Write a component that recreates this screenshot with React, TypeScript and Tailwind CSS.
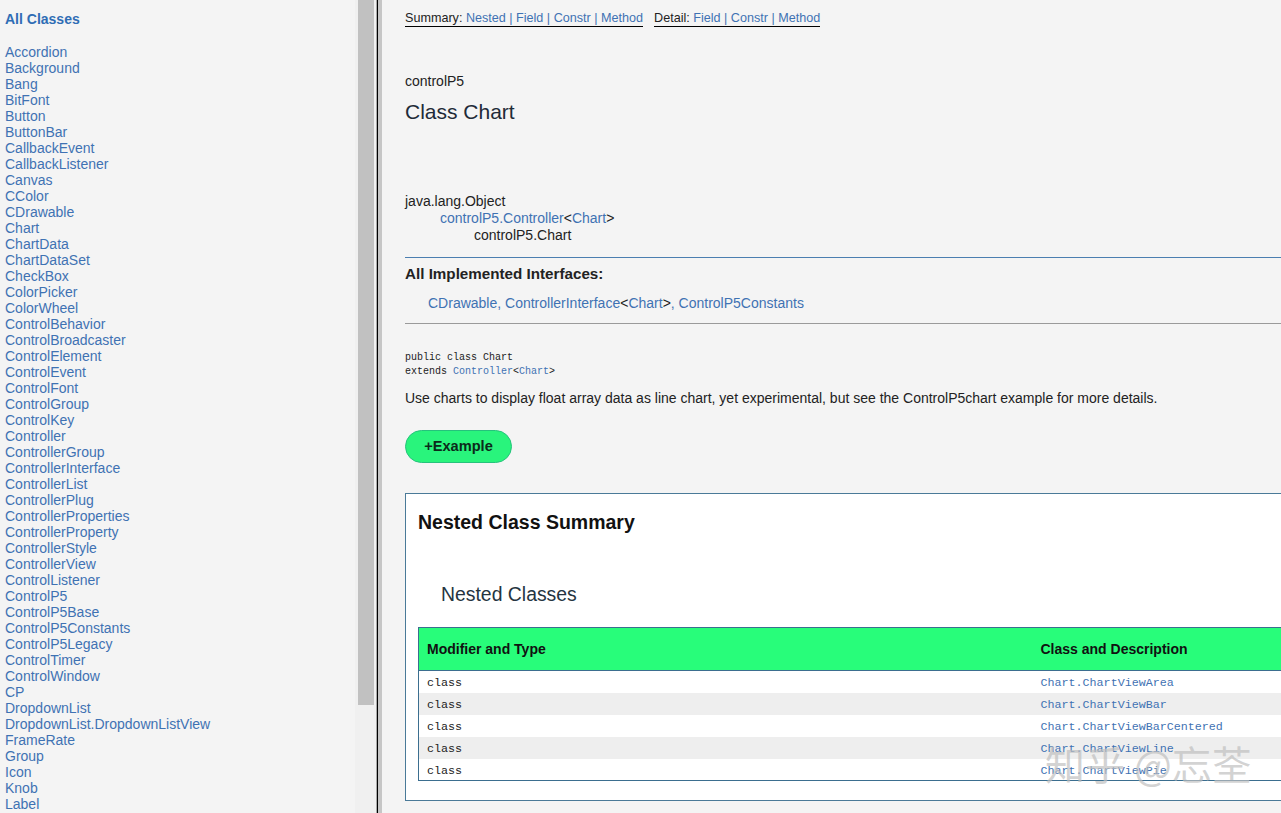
import React from 'react';

const classes = [
  'Accordion', 'Background', 'Bang', 'BitFont', 'Button', 'ButtonBar', 'CallbackEvent', 'CallbackListener',
  'Canvas', 'CColor', 'CDrawable', 'Chart', 'ChartData', 'ChartDataSet', 'CheckBox', 'ColorPicker',
  'ColorWheel', 'ControlBehavior', 'ControlBroadcaster', 'ControlElement', 'ControlEvent', 'ControlFont',
  'ControlGroup', 'ControlKey', 'Controller', 'ControllerGroup', 'ControllerInterface', 'ControllerList',
  'ControllerPlug', 'ControllerProperties', 'ControllerProperty', 'ControllerStyle', 'ControllerView',
  'ControlListener', 'ControlP5', 'ControlP5Base', 'ControlP5Constants', 'ControlP5Legacy', 'ControlTimer',
  'ControlWindow', 'CP', 'DropdownList', 'DropdownList.DropdownListView', 'FrameRate', 'Group', 'Icon',
  'Knob', 'Label',
];

const nested = [
  'Chart.ChartViewArea',
  'Chart.ChartViewBar',
  'Chart.ChartViewBarCentered',
  'Chart.ChartViewLine',
  'Chart.ChartViewPie',
];

const sans = "font-['Liberation_Sans',Arial,sans-serif]";
const mono = "font-['Liberation_Mono','Courier_New',monospace]";

function Sep() {
  return <span className="text-[#3f72b3]"> | </span>;
}

export default function App() {
  return (
    <div className={`flex h-[813px] w-[1281px] overflow-hidden bg-[#f4f4f4] ${sans}`}>
      {/* left frame */}
      <div className="flex w-[376px] shrink-0">
        <div className="flex-1 pl-[5px] pt-[10px]">
          <div className="text-[14px] font-bold leading-[18px] text-[#2f6db5]">All Classes</div>
          <ul className="mt-[16px] text-[14px] leading-[16px] text-[#3f72b3]">
            {classes.map((c) => (
              <li key={c} className="whitespace-nowrap">{c}</li>
            ))}
          </ul>
        </div>
        <div className="w-[21px] bg-[#f0f0f0] pl-[3px]">
          <div className="h-[705px] w-[16px] bg-[#c1c1c1]" />
        </div>
      </div>

      {/* frame divider */}
      <div className="flex w-[6px] shrink-0 border-l border-[#a8a8a8]">
        <div className="w-px bg-black" />
        <div className="flex-1 bg-[#c6c6c6]" />
      </div>

      {/* right frame */}
      <div className="relative flex-1 overflow-hidden">
        <div className="w-[1000px] pl-[23px] pt-[11px] text-[14px] text-[#222]">
          <div className="flex gap-[11px] text-[12.6px] leading-[14px]">
            <span className="border-b border-black pb-px">
              Summary: <span className="text-[#3f72b3]">Nested</span><Sep /><span className="text-[#3f72b3]">Field</span><Sep />
              <span className="text-[#3f72b3]">Constr</span><Sep /><span className="text-[#3f72b3]">Method</span>
            </span>
            <span className="border-b border-black pb-px">
              Detail: <span className="text-[#3f72b3]">Field</span><Sep /><span className="text-[#3f72b3]">Constr</span><Sep />
              <span className="text-[#3f72b3]">Method</span>
            </span>
          </div>

          <div className="mt-[45px] leading-[18px]">controlP5</div>
          <h1 className="mt-[9px] text-[21px] leading-[26px] text-[#1f2b38]">Class Chart</h1>

          <div className="mt-[68px] leading-[17px]">
            <div>java.lang.Object</div>
            <div className="pl-[35px]">
              <span className="text-[#3f72b3]">controlP5.Controller</span>&lt;<span className="text-[#3f72b3]">Chart</span>&gt;
            </div>
            <div className="pl-[69px]">controlP5.Chart</div>
          </div>

          <div className="mt-[13px] border-t border-[#4b7eb0]" />
          <div className="mt-[7px] text-[15.2px] font-bold leading-[18px]">All Implemented Interfaces:</div>
          <div className="mt-[11px] pl-[23px] leading-[18px] text-[#3f72b3]">
            CDrawable, ControllerInterface<span className="text-[#222]">&lt;</span>Chart<span className="text-[#222]">&gt;</span>, ControlP5Constants
          </div>
          <div className="mt-[11px] border-t border-[#9a9a9a]" />

          <pre className={`mt-[27px] text-[10px] leading-[14px] ${mono}`}>
            public class Chart{'\n'}extends <span className="text-[#3f72b3]">Controller</span>&lt;<span className="text-[#3f72b3]">Chart</span>&gt;
          </pre>
          <p className="mt-[10px] leading-[18px]">
            Use charts to display float array data as line chart, yet experimental, but see the ControlP5chart example for more details.
          </p>

          <button className="mt-[23px] flex h-[33px] w-[107px] items-center justify-center rounded-full border border-[#26c27c] bg-[#29f47c] text-[14.6px] font-bold text-[#0c2a1a]">
            +Example
          </button>

          <div className="mt-[30px] border border-[#4a7a98] bg-white pb-[19px] pl-[12px] pt-[16px]">
            <h3 className="text-[19.5px] font-bold leading-[24px] text-[#111]">Nested Class Summary</h3>
            <div className="mt-[48px] pl-[23px] text-[19.4px] leading-[24px] text-[#253441]">Nested Classes</div>
            <table className="mt-[21px] w-[900px] border-collapse border border-[#3b6e8f]">
              <thead>
                <tr className="h-[43px] border-b border-[#3b6e8f] bg-[#28fd7a] text-left text-[14px] font-bold text-[#111]">
                  <th className="w-[614px] pl-[8px]">Modifier and Type</th>
                  <th className="pl-[8px]">Class and Description</th>
                </tr>
              </thead>
              <tbody className={`text-[11.7px] ${mono}`}>
                {nested.map((n, i) => (
                  <tr key={n} className={`h-[22px] ${i % 2 === 1 ? 'bg-[#eeeeee]' : 'bg-white'}`}>
                    <td className="pl-[8px] pt-[4px] text-[#222]">class</td>
                    <td className="pl-[8px] pt-[4px] text-[#3f72b3]">{n}</td>
                  </tr>
                ))}
              </tbody>
            </table>
          </div>
        </div>

        {/* watermark */}
        <div className="pointer-events-none absolute left-[663px] top-[738px] font-['Noto_Sans_CJK_SC',sans-serif] text-[40px] leading-[50px] text-[#bfbfbf]/70">
          知乎 @忘荃
        </div>
      </div>
    </div>
  );
}
